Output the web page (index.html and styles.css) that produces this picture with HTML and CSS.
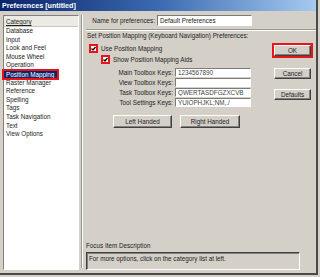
FILE: index.html
```html
<!DOCTYPE html>
<html lang="en">
<head>
  <meta charset="UTF-8">
  <title>Preferences [untitled]</title>
  <link rel="stylesheet" href="styles.css">
</head>
<body>
  <div class="window">
    <div class="titlebar">Preferences [untitled]</div>

    <div class="main">
      <!-- Category list -->
      <div class="category-list">
        <div class="list-header"><span>Category</span></div>
        <ul class="list-items">
          <li>Database</li>
          <li>Input</li>
          <li>Look and Feel</li>
          <li>Mouse Wheel</li>
          <li>Operation</li>
          <li><span class="selected">Position Mapping</span></li>
          <li>Raster Manager</li>
          <li>Reference</li>
          <li>Spelling</li>
          <li>Tags</li>
          <li>Task Navigation</li>
          <li>Text</li>
          <li>View Options</li>
        </ul>
      </div>

      <div class="divider"></div>

      <!-- Preferences panel -->
      <div class="panel">
        <div class="name-row">
          <span class="name-label">Name for preferences:</span>
          <div class="field name-field">Default Preferences</div>
        </div>
        <div class="rule"></div>

        <div class="section-title">Set Position Mapping (Keyboard Navigation) Preferences:</div>

        <div class="section">
          <div class="options">
            <div class="check-row">
              <span class="check"><svg viewBox="0 0 5 5" width="5" height="5"><path d="M0.5 2.5 L2 4 L4.5 1" fill="none" stroke="#000" stroke-width="1.2"/></svg></span>
              <span>Use Position Mapping</span>
            </div>
            <div class="check-row sub">
              <span class="check"><svg viewBox="0 0 5 5" width="5" height="5"><path d="M0.5 2.5 L2 4 L4.5 1" fill="none" stroke="#000" stroke-width="1.2"/></svg></span>
              <span>Show Position Mapping Aids</span>
            </div>

            <div class="key-rows">
              <div class="key-row"><span class="key-label">Main Toolbox Keys:</span><div class="field key-field">1234567890</div></div>
              <div class="key-row"><span class="key-label">View Toolbox Keys:</span><div class="field key-field"></div></div>
              <div class="key-row"><span class="key-label">Task Toolbox Keys:</span><div class="field key-field">QWERTASDFGZXCVB</div></div>
              <div class="key-row"><span class="key-label">Tool Settings Keys:</span><div class="field key-field">YUIOPHJKL;NM,./</div></div>
            </div>

            <div class="hand-buttons">
              <button class="btn btn-hand">Left Handed</button>
              <button class="btn btn-hand">Right Handed</button>
            </div>
          </div>

          <div class="actions">
            <button class="btn btn-action btn-ok">OK</button>
            <button class="btn btn-action btn-cancel">Cancel</button>
            <button class="btn btn-action btn-defaults">Defaults</button>
          </div>
        </div>

        <div class="focus-label">Focus Item Description</div>
        <div class="focus-box">For more options, click on the category list at left.</div>
      </div>
    </div>
  </div>
</body>
</html>
```

FILE: styles.css
```css
body {
  margin: 0;
  background-color: #d4d0c8;
  font-family: "Liberation Sans", Arial, sans-serif;
  font-size: 6.3px;
  color: #222;
}
.window {
  width: 318px;
  height: 275px;
  box-sizing: border-box;
  border-right: 2px solid #4a4a4a;
  border-bottom: 2px solid #4a4a4a;
  background-color: #d4d0c8;
  display: flex;
  flex-direction: column;
}
.titlebar {
  height: 11px;
  line-height: 11px;
  padding-left: 2px;
  color: white;
  font-weight: bold;
  font-size: 7.2px;
  background: linear-gradient(to right, #0a246a, #3a6ab0 50%, #a6caf0);
}
.main {
  flex: 1;
  display: flex;
  padding: 4px 0 3px 3px;
  min-height: 0;
}

/* category list */
.category-list {
  width: 76px;
  box-sizing: border-box;
  background-color: white;
  border: 1px solid;
  border-color: #808080 #ffffff #ffffff #808080;
}
.list-header {
  height: 11px;
  line-height: 11px;
  padding-left: 2px;
  background-color: #eceae4;
  border-bottom: 1px solid #c8c4bc;
  box-sizing: border-box;
}
.list-header span {
  text-decoration: underline;
}
.list-items {
  list-style: none;
  margin: 0;
  padding: 0;
}
.list-items li {
  height: 8.6px;
  line-height: 8.6px;
  padding-left: 2px;
  white-space: nowrap;
}
.selected {
  display: inline-block;
  vertical-align: top;
  margin: 1px 0 0 -2px;
  padding: 0 3px 0 2px;
  line-height: 7px;
  background-color: #0a246a;
  color: white;
  outline: 2px solid #e8141c;
  outline-offset: 0;
}
.divider {
  width: 0;
  margin: 0 0 2px 2px;
  border-left: 1px solid #9a978f;
  border-right: 1px solid #ffffff;
}

/* right panel */
.panel {
  flex: 1;
  display: flex;
  flex-direction: column;
}
.name-row {
  display: flex;
  align-items: center;
  height: 11px;
}
.name-label {
  width: 72px;
  text-align: right;
  margin-right: 2px;
}
.field {
  background-color: white;
  border: 1px solid;
  border-color: #7a7a7a #ffffff #ffffff #7a7a7a;
  box-sizing: border-box;
  padding-left: 2px;
  white-space: nowrap;
  overflow: hidden;
}
.name-field {
  width: 95px;
  height: 11px;
  line-height: 9px;
}
.rule {
  margin: 3px 0 0 3px;
  border-top: 1px solid #9a978f;
  border-bottom: 1px solid #ffffff;
}
.section-title {
  margin-top: 1px;
  padding-left: 4px;
  line-height: 8px;
}
.section {
  display: flex;
}
.options {
  flex: 1;
}
.check-row {
  display: flex;
  align-items: center;
  height: 9px;
  margin-top: 4px;
  padding-left: 6px;
}
.check-row.sub {
  margin-top: 2px;
  padding-left: 18px;
}
.check {
  width: 9px;
  height: 9px;
  box-sizing: border-box;
  border: 2px solid #e8141c;
  background-color: white;
  margin-right: 3px;
  display: flex;
  align-items: center;
  justify-content: center;
}
.key-rows {
  margin-top: 4px;
}
.key-row {
  display: flex;
  align-items: center;
  height: 9px;
  margin-top: 1px;
}
.key-label {
  width: 90px;
  text-align: right;
  margin-right: 2px;
}
.key-field {
  width: 76px;
  height: 9px;
  line-height: 7px;
  color: #444;
}
.hand-buttons {
  display: flex;
  gap: 8px;
  margin: 8px 0 0 30px;
}
.btn {
  font-family: "Liberation Sans", Arial, sans-serif;
  font-size: 6.3px;
  color: #222;
  background-color: #d4d0c8;
  border: 1px solid;
  border-color: #ffffff #404040 #404040 #ffffff;
  box-shadow: inset -1px -1px #808080;
  padding: 0;
  margin: 0;
}
.btn-hand {
  width: 59px;
  height: 13px;
}
.btn-hand + .btn-hand {
  width: 60px;
}
.actions {
  width: 42px;
  padding-left: 3px;
  display: flex;
  flex-direction: column;
}
.btn-action {
  width: 37px;
  height: 11px;
}
.btn-ok {
  margin-top: 5px;
  outline: 2px solid #e8141c;
  outline-offset: 0;
}
.btn-cancel {
  margin-top: 12px;
}
.btn-defaults {
  margin-top: 10px;
}
.focus-label {
  margin-top: auto;
  padding-left: 3px;
  line-height: 8px;
}
.focus-box {
  margin: 2px 0 0 3px;
  width: 214px;
  height: 18px;
  box-sizing: border-box;
  padding: 2px 0 0 2px;
  line-height: 8px;
  border: 1px solid;
  border-color: #404040 #ffffff #ffffff #404040;
  box-shadow: inset 1px 1px #808080;
}
```
